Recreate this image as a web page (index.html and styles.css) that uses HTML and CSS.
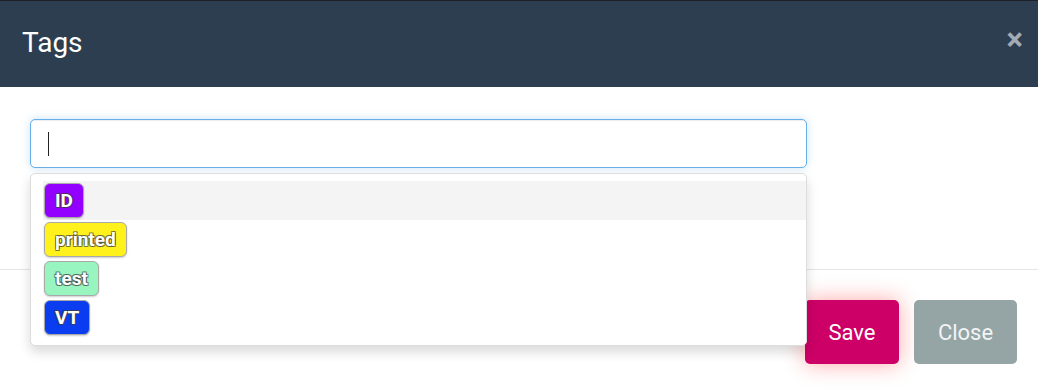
FILE: index.html
```html
<!DOCTYPE html>
<html>
<head>
<meta charset="utf-8">
<link rel="stylesheet" href="styles.css">
</head>
<body>
<div class="topline"></div>
<div class="modal">
  <div class="modal-header">
    <h4 class="title">Tags</h4>
    <span class="close">&times;</span>
  </div>
  <div class="modal-body">
    <div class="field">
      <div class="input"><span class="caret"></span></div>
      <ul class="dropdown">
        <li class="item active"><span class="tag tag-id">ID</span></li>
        <li class="item"><span class="tag tag-printed">printed</span></li>
        <li class="item"><span class="tag tag-test">test</span></li>
        <li class="item"><span class="tag tag-vt">VT</span></li>
      </ul>
    </div>
  </div>
  <div class="modal-footer">
    <button class="btn btn-save">Save</button>
    <button class="btn btn-close">Close</button>
  </div>
</div>
</body>
</html>
```

FILE: styles.css
```css
* { box-sizing: border-box; }
html, body { margin: 0; padding: 0; background: #fff; }
body { font-family: Roboto, "Liberation Sans", Arial, sans-serif; width: 1038px; height: 391px; overflow: hidden; }
.topline { height: 1px; background: #1d2127; }
.modal { width: 1038px; }
.modal-header {
  background: #2d3e50;
  height: 86px;
  display: flex;
  align-items: center;
  justify-content: space-between;
  padding: 0 15px 0 22px;
}
.title { margin: 0; color: #fff; font-size: 28px; font-weight: 400; line-height: 1; padding-bottom: 2px; }
.close { color: #a3abb4; font-size: 31px; font-weight: 700; line-height: 1; margin-top: -10px; }
.modal-body { padding: 32px 30px 0 30px; height: 182px; }
.field { position: relative; width: 777px; }
.input {
  height: 49px;
  border: 1px solid #66afe9;
  border-radius: 5px;
  box-shadow: inset 0 1px 1px rgba(0,0,0,.075), 0 0 8px rgba(102,175,233,.35);
  background: #fff;
  display: flex;
  align-items: center;
  padding-left: 17px;
}
.caret { display: block; width: 1px; height: 24px; background: #222; }
.dropdown {
  position: absolute;
  left: 0; top: 54px;
  width: 777px;
  margin: 0;
  padding: 7px 0 8px 12px;
  list-style: none;
  background: #fff;
  border: 1px solid #ddd;
  border-radius: 5px;
  box-shadow: 0 6px 12px rgba(0,0,0,.15);
  z-index: 10;
}
.item { height: 39px; display: flex; align-items: center; padding-left: 1px; }
.item.active { background: #f4f4f4; }
.tag {
  display: inline-block;
  font-size: 19px;
  font-weight: 700;
  line-height: 23px;
  padding: 5px 10px 5px;
  border: 1px solid #a9a9a9;
  border-radius: 6px;
  color: #fff;
  box-shadow: 0 1px 2px rgba(0,0,0,.2);
  text-shadow: -1px -1px 0 rgba(60,60,60,.6), 1px -1px 0 rgba(60,60,60,.6), -1px 1px 0 rgba(60,60,60,.6), 1px 1px 0 rgba(60,60,60,.6);
}
.tag-id { background: #9300ff; }
.tag-printed { background: #fff21c; }
.tag-test { background: #98f5c0; }
.tag-vt { background: #0b3df0; }
.modal-footer {
  border-top: 1px solid #e5e5e5;
  padding: 30px 21px 0 0;
  display: flex;
  justify-content: flex-end;
  gap: 15px;
}
.btn {
  height: 64px;
  border: none;
  border-radius: 5px;
  font-family: Roboto, "Liberation Sans", Arial, sans-serif;
  font-size: 22px;
  color: #fff;
  padding: 0;
}
.btn-save { width: 94px; background: #cc0066; box-shadow: 0 0 22px rgba(255,60,60,.45); }
.btn-close { width: 103px; background: #95a5a6; color: #f2f4f4; }
```
